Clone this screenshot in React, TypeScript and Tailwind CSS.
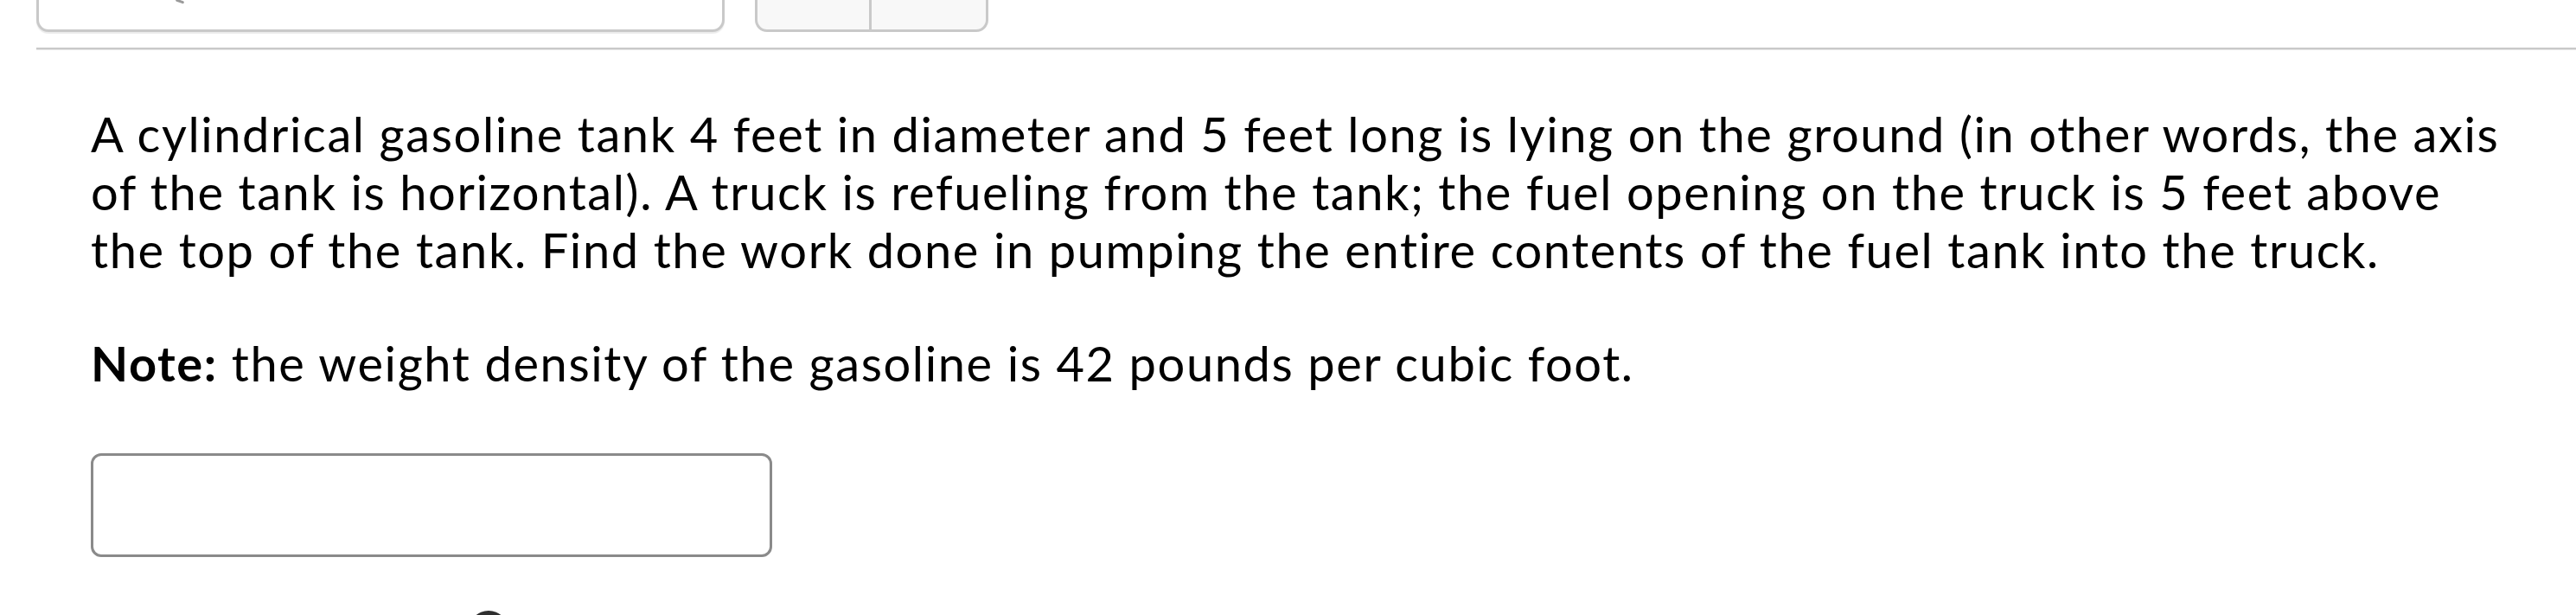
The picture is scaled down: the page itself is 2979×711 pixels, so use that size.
export default function App() {
  return (
    <div className="h-screen bg-white pl-[42px] overflow-hidden" style={{ fontFamily: 'Lato, "Noto Sans", sans-serif' }}>
      {/* cut-off answer controls of previous question */}
      <div className="flex gap-[35px] -mt-[43px]">
        <div className="relative w-[796px] h-[80px] rounded-[14px] border-[3px] border-[#c9c9c9] bg-white shadow-[0_2px_1px_rgba(0,0,0,0.08)]">
          <span className="absolute left-[158px] top-[40px] h-[3px] w-[10px] rotate-[20deg] rounded-full bg-[#9a9a9a]"></span>
        </div>
        <div className="flex w-[270px] h-[80px] rounded-[14px] border-[3px] border-[#c9c9c9] bg-[#f8f8f8] overflow-hidden">
          <div className="w-[132px] border-r-[3px] border-[#c9c9c9]"></div>
          <div className="flex-1"></div>
        </div>
      </div>

      <div className="mt-[18px] h-[3px] bg-[#c9c9c9] border-b border-[#e4e4e4]"></div>

      <div className="pl-[63px] pr-[40px] pt-[63px] text-[56px] leading-[67px] tracking-[1.6px] text-black">
        <p className="max-w-[2800px]">
          A cylindrical gasoline tank 4 feet in diameter and 5 feet long is lying on the ground (in other words, the axis of the tank is horizontal). A truck is refueling from the tank; the fuel opening on the truck is 5 feet above the top of the tank. Find the work done in pumping the entire contents of the fuel tank into the truck.
        </p>
        <p className="mt-[64px]">
          <span className="font-bold">Note:</span> the weight density of the gasoline is 42 pounds per cubic foot.
        </p>
        <input
          type="text"
          className="mt-[71px] block w-[788px] h-[120px] rounded-[12px] border-[3px] border-[#8a8a8a] bg-white outline-none"
        />
        <div className="mt-[62px] ml-[437px] w-[46px] h-[46px] rounded-full bg-[#2f2f2f]"></div>
      </div>
    </div>
  );
}
